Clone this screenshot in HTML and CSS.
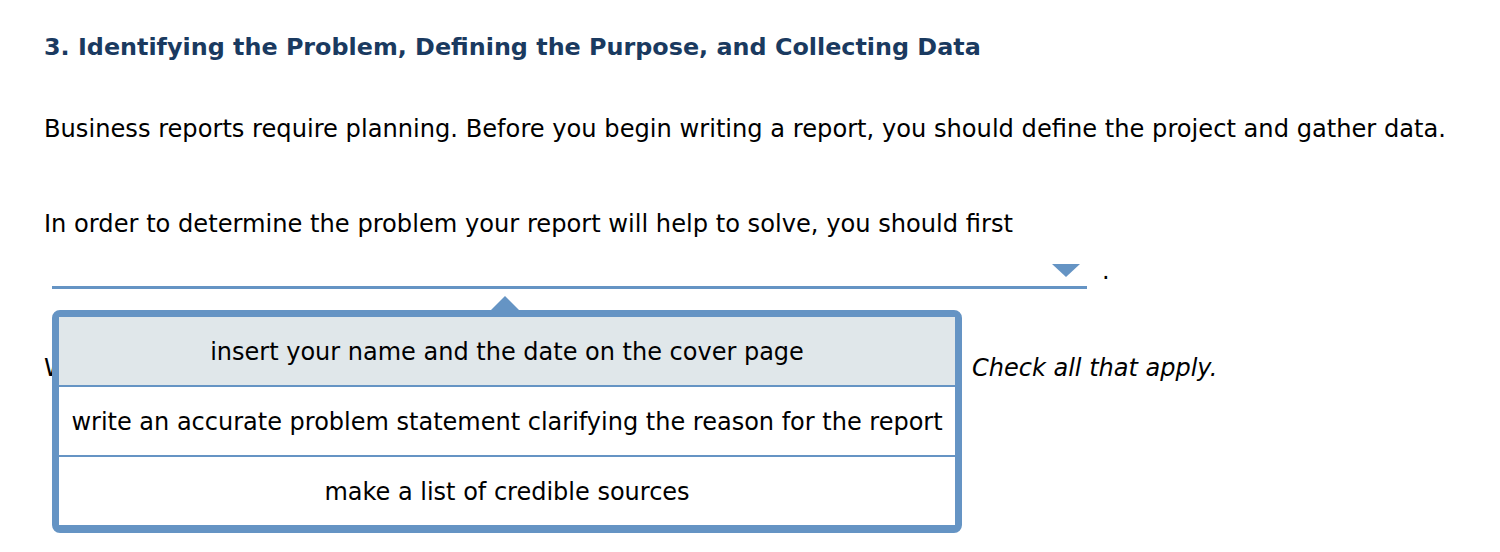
FILE: index.html
```html
<!DOCTYPE html>
<html>
<head>
<meta charset="utf-8">
<link rel="stylesheet" href="styles.css">
</head>
<body>
<div class="page">
  <h2 class="title">3. Identifying the Problem, Defining the Purpose, and Collecting Data</h2>
  <p class="text p1">Business reports require planning. Before you begin writing a report, you should define the project and gather data.</p>
  <p class="text p2">In order to determine the problem your report will help to solve, you should first</p>
  <div class="answer-row">
    <div class="select">
      <span class="arrow"></span>
      <div class="popup">
        <span class="caret"></span>
        <div class="option selected">insert your name and the date on the cover page</div>
        <div class="option">write an accurate problem statement clarifying the reason for the report</div>
        <div class="option">make a list of credible sources</div>
      </div>
    </div>
    <span class="period">.</span>
  </div>
  <p class="text question"><span class="q-main">Which of the following are useful ways to define the purpose of a report?</span><em class="hint">Check all that apply.</em></p>
</div>
</body>
</html>
```
FILE: styles.css
```css
html, body {
  margin: 0;
  padding: 0;
  background: #ffffff;
}
.page {
  box-sizing: border-box;
  min-height: 552px;
  padding: 33px 0 0 44px;
  font-family: "DejaVu Sans", Verdana, sans-serif;
  color: #000;
}
.title {
  margin: 0;
  font-size: 23.85px;
  line-height: 28px;
  font-weight: bold;
  color: #1a3a60;
}
.text {
  margin: 0;
  font-size: 24.15px;
  line-height: 28px;
}
.p1 { margin-top: 54px; }
.p2 { margin-top: 67px; }
.answer-row {
  display: flex;
  align-items: flex-end;
  margin-top: 17px;
  margin-left: 8px;
}
.select {
  position: relative;
  width: 1035px;
  height: 31px;
  border-bottom: 3px solid #6594c4;
}
.arrow {
  position: absolute;
  right: 7px;
  top: 9px;
  width: 0;
  height: 0;
  border-left: 14px solid transparent;
  border-right: 14px solid transparent;
  border-top: 13px solid #6594c4;
}
.period {
  margin-left: 15px;
  font-size: 24px;
  line-height: 28px;
  margin-bottom: 4px;
}
.popup {
  position: absolute;
  left: 0;
  top: 55px;
  width: 896px;
  border: 7px solid #6594c4;
  border-bottom-width: 8px;
  border-radius: 8px;
  background: #fff;
  z-index: 2;
  display: flex;
  flex-direction: column;
}
.caret {
  position: absolute;
  left: 432px;
  top: -21px;
  width: 0;
  height: 0;
  border-left: 14px solid transparent;
  border-right: 14px solid transparent;
  border-bottom: 14px solid #6594c4;
}
.option {
  box-sizing: border-box;
  height: 68px;
  padding-top: 1px;
  display: flex;
  align-items: center;
  justify-content: center;
  font-size: 24px;
  line-height: 28px;
  white-space: nowrap;
  background: #fff;
}
.option + .option {
  height: 70px;
  border-top: 2px solid #6594c4;
}
.option.selected {
  background: #e0e7ea;
}
.question {
  margin-top: 65px;
  display: flex;
}
.q-main {
  width: 928px;
  overflow: hidden;
  white-space: nowrap;
}
.hint {
  font-style: italic;
  font-size: 24px;
}
```
